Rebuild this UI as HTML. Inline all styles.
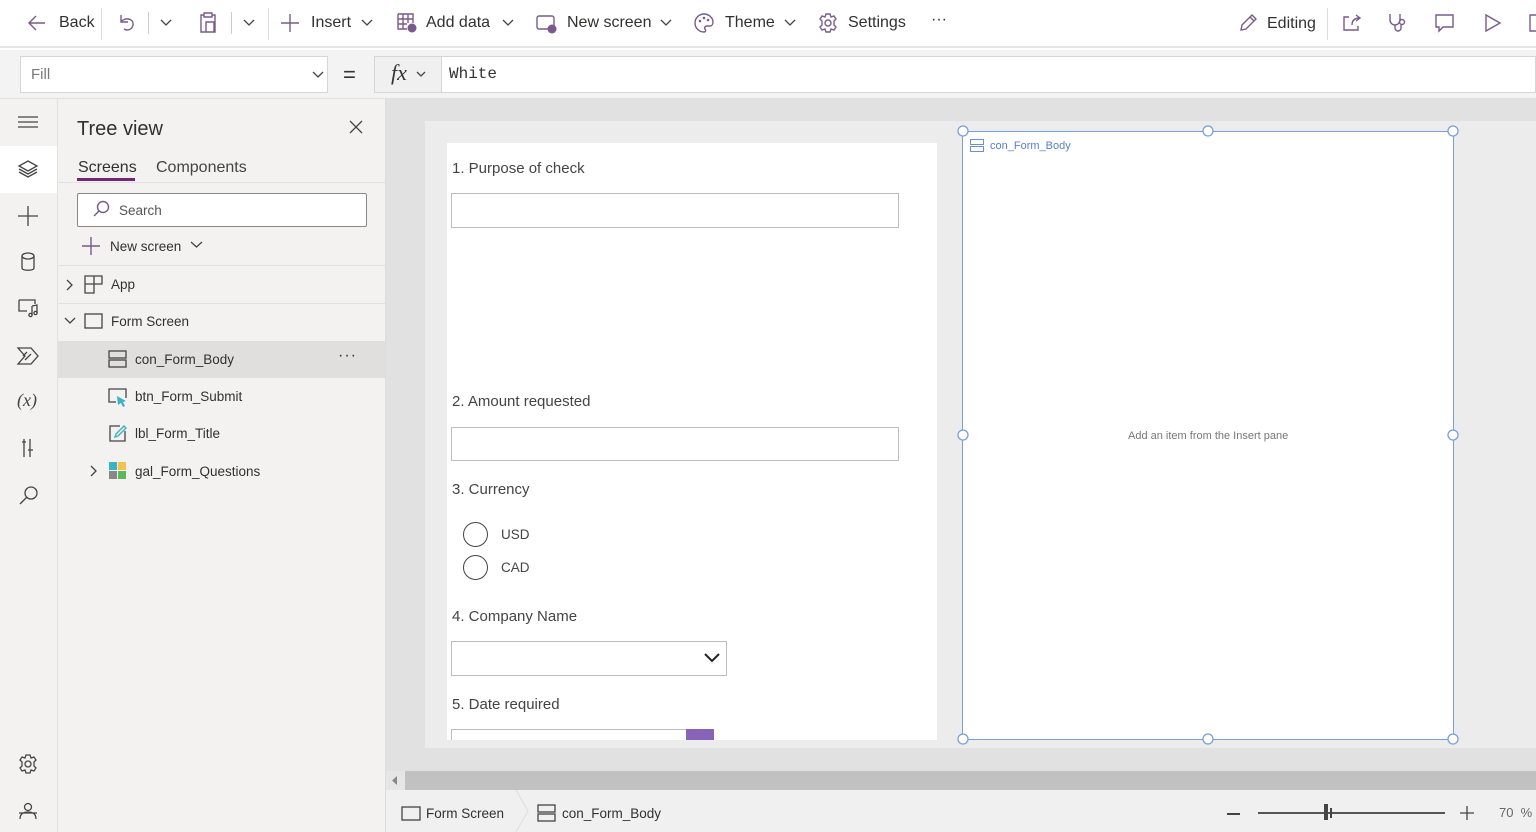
<!DOCTYPE html>
<html><head><meta charset="utf-8"><style>
*{box-sizing:border-box;margin:0;padding:0}
body{width:1536px;height:832px;overflow:hidden;position:relative;font-family:"Liberation Sans",sans-serif;background:#fff;color:#323130}
.a{position:absolute}
.tb{font-size:16px;color:#323130;top:14px}
svg{position:absolute;overflow:visible}
.ic{fill:none;stroke:#7a5a8a;stroke-width:1.4}
.g{fill:none;stroke:#444;stroke-width:1.3}
.t{font-size:13.5px;color:#323130}
.lbl{font-size:15px;color:#444}
.inp{border:1.5px solid #bdbdbd;background:#fff}
</style></head><body>
<!-- top toolbar -->
<div class="a" style="left:0;top:0;width:1536px;height:48px;background:#fff;border-bottom:2px solid #e6e6e6"></div>
<svg style="left:27px;top:14px" width="20" height="18"><path class="ic" d="M18 9H2M9 2L2 9l7 7"/></svg>
<div class="a tb" style="left:59px">Back</div>
<div class="a" style="left:101px;top:8px;width:1px;height:32px;background:#ddd"></div>
<svg style="left:117px;top:13px" width="18" height="20"><path class="ic" d="M4 2v7h7M4 9c3-5 13-4 12 3-1 5-6 6-9 4"/></svg>
<div class="a" style="left:148px;top:12px;width:1px;height:22px;background:#ccc"></div>
<svg style="left:160px;top:19px" width="12" height="8"><path class="g" d="M1 1l5 5 5-5"/></svg>
<svg style="left:199px;top:12px" width="18" height="22"><path class="ic" d="M5 3H2v17h14V3h-3M5 1h8v4H5zM7 10h8v10H7z"/></svg>
<div class="a" style="left:231px;top:12px;width:1px;height:22px;background:#ccc"></div>
<svg style="left:243px;top:19px" width="12" height="8"><path class="g" d="M1 1l5 5 5-5"/></svg>
<div class="a" style="left:268px;top:8px;width:1px;height:32px;background:#ddd"></div>
<svg style="left:281px;top:14px" width="18" height="18"><path class="ic" d="M9 0v18M0 9h18"/></svg>
<div class="a tb" style="left:311px">Insert</div>
<svg style="left:361px;top:19px" width="12" height="8"><path class="g" d="M1 1l5 5 5-5"/></svg>
<svg style="left:397px;top:13px" width="20" height="20"><path class="ic" d="M1 1h15v9M1 1v15h9M1 6h15M1 11h9M6 1v15M11 1v9"/><circle cx="15" cy="15" r="4.5" fill="#7a5a8a"/></svg>
<div class="a tb" style="left:426px">Add data</div>
<svg style="left:502px;top:19px" width="12" height="8"><path class="g" d="M1 1l5 5 5-5"/></svg>
<svg style="left:536px;top:14px" width="22" height="20"><rect class="ic" x="1" y="2" width="17" height="13" rx="2"/><circle cx="16" cy="15" r="4.5" fill="#7a5a8a"/></svg>
<div class="a tb" style="left:567px">New screen</div>
<svg style="left:660px;top:19px" width="12" height="8"><path class="g" d="M1 1l5 5 5-5"/></svg>
<svg style="left:694px;top:13px" width="20" height="20"><path class="ic" d="M10 1a9 9 0 1 0 0 18c2 0 2-2 1-3s0-3 2-3h3c2 0 3-2 3-4 0-4-4-8-9-8z"/><circle cx="6" cy="8" r="1.3" fill="#7a5a8a"/><circle cx="10" cy="5" r="1.3" fill="#7a5a8a"/><circle cx="14" cy="7" r="1.3" fill="#7a5a8a"/></svg>
<div class="a tb" style="left:725px">Theme</div>
<svg style="left:784px;top:19px" width="12" height="8"><path class="g" d="M1 1l5 5 5-5"/></svg>
<svg style="left:818px;top:13px" width="20" height="20"><circle class="ic" cx="10" cy="10" r="3"/><path class="ic" d="M8 1h4l1 3 3-1 2 3-2 2v4l2 2-2 3-3-1-1 3H8l-1-3-3 1-2-3 2-2V8L2 6l2-3 3 1z"/></svg>
<div class="a tb" style="left:848px">Settings</div>
<div class="a tb" style="left:931px;top:11px">···</div>
<svg style="left:1239px;top:14px" width="18" height="18"><path class="ic" d="M2 16l1-5L13 1l4 4L7 15zM11 3l4 4"/></svg>
<div class="a tb" style="left:1267px;top:15px">Editing</div>
<div class="a" style="left:1327px;top:8px;width:1px;height:32px;background:#ddd"></div>
<svg style="left:1342px;top:14px" width="20" height="18"><path class="ic" d="M7 3H2v13h14v-4M10 11c0-5 3-7 8-7M14 1l4 3-4 3"/></svg>
<svg style="left:1388px;top:13px" width="20" height="20"><path class="ic" d="M2 1v6a5 5 0 0 0 10 0V1M7 12v3a3 3 0 0 0 6 0v-3"/><circle class="ic" cx="14" cy="9" r="2.5"/></svg>
<svg style="left:1434px;top:14px" width="22" height="20"><path class="ic" d="M2 1h17v12H9l-4 4v-4H2z"/></svg>
<svg style="left:1484px;top:14px" width="18" height="18"><path class="ic" d="M2 1l14 8-14 8z"/></svg>
<svg style="left:1529px;top:14px" width="10" height="18"><path class="ic" d="M1 1h8v16H1z"/></svg>

<!-- formula bar -->
<div class="a" style="left:0;top:50px;width:1536px;height:49px;background:#f3f3f3;border-bottom:1px solid #e0e0e0"></div>
<div class="a" style="left:20px;top:56px;width:308px;height:37px;background:#fff;border:1px solid #d6d6d6"></div>
<div class="a" style="left:31px;top:66px;font-size:15px;color:#777">Fill</div>
<svg style="left:312px;top:71px" width="12" height="8"><path class="g" d="M1 1l5 5 5-5"/></svg>
<div class="a" style="left:343px;top:62px;font-size:22px;color:#333">=</div>
<div class="a" style="left:374px;top:56px;width:68px;height:37px;background:#f0f0f0;border:1px solid #d6d6d6"></div>
<div class="a" style="left:391px;top:60px;font-family:'Liberation Serif',serif;font-style:italic;font-size:22px;color:#333">fx</div>
<svg style="left:416px;top:71px" width="10" height="6"><path class="g" d="M1 1l4 4 4-4"/></svg>
<div class="a" style="left:442px;top:56px;width:1094px;height:37px;background:#fff;border:1px solid #d6d6d6;border-left:none"></div>
<div class="a" style="left:449px;top:65px;font-family:'Liberation Mono',monospace;font-size:16px;color:#333">White</div>

<!-- left rail -->
<div class="a" style="left:0;top:99px;width:58px;height:733px;background:#f3f2f1;border-right:1px solid #e1e1e1"></div>
<div class="a" style="left:0;top:146px;width:57px;height:47px;background:#fff"></div>
<svg style="left:18px;top:116px" width="20" height="12"><path class="g" d="M0 1h20M0 6h20M0 11h20"/></svg>
<svg style="left:18px;top:160px" width="20" height="18"><path class="g" d="M10 1l9 5-9 5-9-5zM1 9l9 5 9-5M1 12l9 5 9-5"/></svg>
<svg style="left:18px;top:206px" width="20" height="20"><path class="g" d="M10 0v20M0 10h20"/></svg>
<svg style="left:20px;top:252px" width="16" height="20"><ellipse class="g" cx="8" cy="4" rx="6" ry="3"/><path class="g" d="M2 4v12c0 3 12 3 12 0V4"/></svg>
<svg style="left:18px;top:299px" width="22" height="18"><path class="g" d="M1 1h16v4M1 1v11h8M14 7l5-1v8M14 7v9"/><circle class="g" cx="12.5" cy="16" r="1.6"/><circle class="g" cx="17.5" cy="14" r="1.6"/></svg>
<svg style="left:17px;top:347px" width="22" height="18"><path class="g" d="M1 1h13l7 8-7 8H1l7-8zM6 9l4-4M8 13l6-6"/></svg>
<div class="a" style="left:17px;top:390px;font-family:'Liberation Serif',serif;font-size:18px;color:#444"><i>(x)</i></div>
<svg style="left:21px;top:438px" width="14" height="20"><path class="g" d="M3 1v18M9 1v18M1 4h4M7 12h5"/></svg>
<svg style="left:19px;top:485px" width="20" height="20"><circle class="g" cx="12" cy="8" r="6"/><path class="g" d="M8 12l-7 7"/></svg>
<svg style="left:18px;top:754px" width="20" height="20"><circle class="g" cx="10" cy="10" r="3"/><path class="g" d="M8 1h4l1 3 3-1 2 3-2 2v4l2 2-2 3-3-1-1 3H8l-1-3-3 1-2-3 2-2V8L2 6l2-3 3 1z"/></svg>
<svg style="left:18px;top:802px" width="20" height="18"><circle class="g" cx="10" cy="5" r="3.5"/><path class="g" d="M2 17c0-5 3-7 8-7s8 2 8 7M1 11h18"/></svg>

<!-- tree panel -->
<div class="a" style="left:58px;top:99px;width:328px;height:733px;background:#f3f2f1;border-right:1px solid #ddd"></div>
<div class="a" style="left:77px;top:118px;font-size:20px;color:#323130">Tree view</div>
<svg style="left:349px;top:120px" width="14" height="14"><path class="g" d="M1 1l12 12M13 1L1 13"/></svg>
<div class="a" style="left:78px;top:159px;font-size:16px;color:#323130">Screens</div>
<div class="a" style="left:77px;top:178px;width:58px;height:3px;background:#742774"></div>
<div class="a" style="left:156px;top:159px;font-size:16px;color:#444">Components</div>
<div class="a" style="left:58px;top:182px;width:327px;height:1px;background:#e1e1e1"></div>
<div class="a" style="left:77px;top:193px;width:290px;height:34px;background:#fff;border:1px solid #8a8886;border-radius:2px"></div>
<svg style="left:92px;top:200px" width="18" height="18"><circle class="ic" cx="11" cy="7" r="5.5"/><path class="ic" d="M7 11l-5 5"/></svg>
<div class="a t" style="left:119px;top:203px;color:#555">Search</div>
<svg style="left:82px;top:237px" width="18" height="18"><path class="ic" d="M9 0v18M0 9h18"/></svg>
<div class="a t" style="left:110px;top:239px">New screen</div>
<svg style="left:190px;top:241px" width="13" height="8"><path class="g" d="M1 1l5.5 5 5.5-5"/></svg>
<div class="a" style="left:58px;top:265px;width:327px;height:1px;background:#e1e1e1"></div>
<svg style="left:66px;top:279px" width="8" height="12"><path class="g" d="M1 1l5 5-5 5"/></svg>
<svg style="left:84px;top:275px" width="19" height="19"><path class="g" d="M1 1h17v8H10v9H1zM10 1v8M1 9h9"/></svg>
<div class="a t" style="left:111px;top:277px">App</div>
<div class="a" style="left:58px;top:303px;width:327px;height:1px;background:#e1e1e1"></div>
<svg style="left:64px;top:317px" width="12" height="8"><path class="g" d="M1 1l5 5 5-5"/></svg>
<svg style="left:84px;top:313px" width="19" height="16"><rect class="g" x="1" y="1" width="17" height="14"/></svg>
<div class="a t" style="left:111px;top:314px">Form Screen</div>
<div class="a" style="left:58px;top:341px;width:327px;height:37px;background:#e1dfdd"></div>
<svg style="left:108px;top:350px" width="19" height="19"><rect class="g" x="1" y="1" width="17" height="7"/><rect class="g" x="1" y="10" width="17" height="7"/></svg>
<div class="a t" style="left:135px;top:352px">con_Form_Body</div>
<div class="a" style="left:338px;top:347px;font-size:16px;color:#333;letter-spacing:1px">···</div>
<svg style="left:108px;top:388px" width="19" height="19"><path class="g" d="M8 14H1V1h17v9"/><path d="M9 8l9 5-3 1 2 4-2 1-2-4-3 2z" fill="#3ab4c4"/></svg>
<div class="a t" style="left:135px;top:389px">btn_Form_Submit</div>
<svg style="left:109px;top:425px" width="17" height="17"><path class="g" d="M11 1H1v15h15V6"/><path d="M6 12l1-3 8-8 2 2-8 8z" fill="none" stroke="#3ab4c4" stroke-width="1.4"/></svg>
<div class="a t" style="left:135px;top:426px">lbl_Form_Title</div>
<svg style="left:90px;top:465px" width="8" height="12"><path class="g" d="M1 1l5 5-5 5"/></svg>
<div class="a" style="left:109px;top:462px;width:8px;height:8px;background:#3ab4c4"></div>
<div class="a" style="left:118px;top:462px;width:8px;height:8px;background:#f2c14e"></div>
<div class="a" style="left:109px;top:471px;width:8px;height:8px;background:#888"></div>
<div class="a" style="left:118px;top:471px;width:8px;height:8px;background:#5cb85c"></div>
<div class="a t" style="left:135px;top:464px">gal_Form_Questions</div>

<!-- canvas -->
<div class="a" style="left:386px;top:99px;width:1150px;height:672px;background:#e1e1e1"></div>
<div class="a" style="left:425px;top:121px;width:1111px;height:627px;background:#ececec"></div>
<div class="a" style="left:447px;top:143px;width:490px;height:597px;background:#fff"></div>
<div class="a lbl" style="left:452px;top:160px">1. Purpose of check</div>
<div class="a inp" style="left:451px;top:193px;width:448px;height:35px"></div>
<div class="a lbl" style="left:452px;top:393px">2. Amount requested</div>
<div class="a inp" style="left:451px;top:427px;width:448px;height:34px"></div>
<div class="a lbl" style="left:452px;top:481px">3. Currency</div>
<div class="a" style="left:463px;top:522px;width:25px;height:25px;border:1.6px solid #444;border-radius:50%"></div>
<div class="a t" style="left:501px;top:527px;color:#444">USD</div>
<div class="a" style="left:463px;top:555px;width:25px;height:25px;border:1.6px solid #444;border-radius:50%"></div>
<div class="a t" style="left:501px;top:560px;color:#444">CAD</div>
<div class="a lbl" style="left:452px;top:608px">4. Company Name</div>
<div class="a inp" style="left:451px;top:641px;width:276px;height:35px"></div>
<svg style="left:704px;top:653px" width="16" height="10"><path d="M1 1l7 7 7-7" fill="none" stroke="#222" stroke-width="2"/></svg>
<div class="a lbl" style="left:452px;top:696px">5. Date required</div>
<div class="a" style="left:451px;top:729px;width:236px;height:11px;border:1.5px solid #bdbdbd;border-bottom:none"></div>
<div class="a" style="left:686px;top:729px;width:28px;height:11px;background:#8764b8"></div>

<!-- selected container -->
<div class="a" style="left:962px;top:131px;width:492px;height:609px;background:#fff;border:1.5px solid #7a9fd6"></div>
<svg style="left:970px;top:139px" width="14" height="13"><rect x="0.5" y="0.5" width="13" height="5" fill="none" stroke="#6b8fd0"/><rect x="0.5" y="7.5" width="13" height="5" fill="none" stroke="#6b8fd0"/></svg>
<div class="a" style="left:990px;top:140px;font-size:11px;color:#5a7fc8">con_Form_Body</div>
<div class="a" style="left:1128px;top:430px;font-size:11px;color:#777">Add an item from the Insert pane</div>
<svg style="left:956px;top:125px" width="506" height="622"><g fill="#fff" stroke="#7a9fd6" stroke-width="1.3"><circle cx="7" cy="6" r="5"/><circle cx="252" cy="6" r="5"/><circle cx="497" cy="6" r="5"/><circle cx="7" cy="310" r="5"/><circle cx="497" cy="310" r="5"/><circle cx="7" cy="614" r="5"/><circle cx="252" cy="614" r="5"/><circle cx="497" cy="614" r="5"/></g></svg>

<!-- scrollbar -->
<div class="a" style="left:386px;top:771px;width:1150px;height:19px;background:#c1c1c1"></div>
<div class="a" style="left:386px;top:771px;width:19px;height:19px;background:#e6e6e6"></div>
<svg style="left:392px;top:776px" width="6" height="9"><path d="M5 0v9L0 4.5z" fill="#888"/></svg>

<!-- status bar -->
<div class="a" style="left:386px;top:790px;width:1150px;height:42px;background:#f0f0f0"></div>
<svg style="left:515px;top:790px" width="16" height="42"><path d="M1 0l12 21L1 42" fill="none" stroke="#ddd"/></svg>
<svg style="left:401px;top:806px" width="20" height="15"><rect class="g" x="1" y="1" width="18" height="13"/></svg>
<div class="a t" style="left:426px;top:806px">Form Screen</div>
<svg style="left:537px;top:804px" width="19" height="19"><rect class="g" x="1" y="1" width="17" height="7"/><rect class="g" x="1" y="10" width="17" height="7"/></svg>
<div class="a t" style="left:562px;top:806px">con_Form_Body</div>
<div class="a" style="left:1227px;top:813px;width:13px;height:1.5px;background:#444"></div>
<div class="a" style="left:1258px;top:812px;width:187px;height:2px;background:#555"></div>
<div class="a" style="left:1324px;top:804px;width:4px;height:16px;background:#444"></div>
<div class="a" style="left:1330px;top:808px;width:2px;height:10px;background:#444"></div>
<svg style="left:1460px;top:806px" width="14" height="14"><path class="g" d="M7 0v14M0 7h14"/></svg>
<div class="a" style="left:1499px;top:805px;font-size:13px;color:#666">70 &nbsp;%</div>
</body></html>
